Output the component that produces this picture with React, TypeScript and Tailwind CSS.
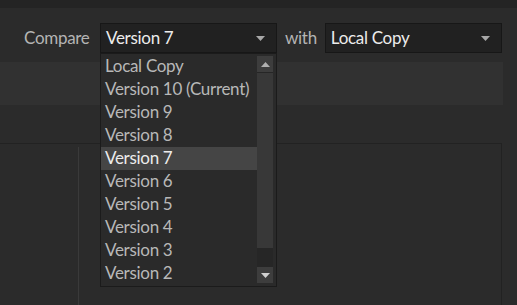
import React from "react";

const versions = [
  "Local Copy",
  "Version 10 (Current)",
  "Version 9",
  "Version 8",
  "Version 7",
  "Version 6",
  "Version 5",
  "Version 4",
  "Version 3",
  "Version 2",
];

function Caret({ up = false, className = "" }: { up?: boolean; className?: string }) {
  return (
    <svg width="9" height="5" viewBox="0 0 9 5" className={className}>
      <path d={up ? "M0 5 L4.5 0 L9 5 Z" : "M0 0 L9 0 L4.5 5 Z"} fill="currentColor" />
    </svg>
  );
}

function Select({ value, width }: { value: string; width: string }) {
  return (
    <div
      className={`${width} h-[30px] flex items-center justify-between pl-[5px] pr-[11px] bg-[#212121] border border-[#171717] text-[#ececec]`}>
      <span className="pb-[2px]">{value}</span>
      <Caret className="text-[#a8a8a8]" />
    </div>
  );
}

export default function App() {
  return (
    <div
      className="relative w-[517px] h-[305px] overflow-hidden bg-[#2b2b2b] text-[17px] leading-none tracking-[-0.3px]"
      style={{ fontFamily: "Lato, 'Noto Sans', sans-serif" }}>
      <div className="h-[8px] bg-[#242424]" />
      <div className="flex items-center mt-[15px] pl-[24px]">
        <span className="text-[#b4b4b4] w-[76px] pb-[2px]">Compare</span>
        <Select value="Version 7" width="w-[177px]" />
        <span className="text-[#b4b4b4] ml-[8px] mr-[8px] pb-[2px]">with</span>
        <Select value="Local Copy" width="w-[177px]" />
      </div>
      <div className="mt-[9px] h-[43px] w-[503px] bg-[#313131]" />
      <div className="mt-[38px] h-[200px] w-[502px] border-t border-r border-[#222] flex">
        <div className="w-[78px] h-full" />
        <div className="mt-[3px] w-px h-full bg-[#3a3a3a]" />
      </div>

      {/* open dropdown list */}
      <div className="absolute left-[100px] top-[53px] w-[177px] h-[234px] bg-[#2a2a2a] border border-[#1b1b1b] flex">
        <div className="flex-1 flex flex-col pt-px">
          {versions.map((v) => (
            <div
              key={v}
              className={`h-[23.2px] flex items-center pl-[4px] pb-[3px] ${
                v === "Version 7" ? "bg-[#454545] text-[#ececec]" : "text-[#b8b8b8]"
              }`}>
              {v}
            </div>
          ))}
        </div>
        <div className="w-[16px] mr-[3px] flex flex-col pt-[2px] pb-[3px]">
          <div className="h-[16px] bg-[#3d3d3d] flex items-center justify-center text-[#b0b0b0]">
            <Caret up />
          </div>
          <div className="h-[176px] bg-[#383838] border-t border-[#262626]" />
          <div className="flex-1 bg-[#262626]" />
          <div className="h-[16px] bg-[#3d3d3d] flex items-center justify-center text-[#d0d0d0]">
            <Caret />
          </div>
        </div>
      </div>
    </div>
  );
}
